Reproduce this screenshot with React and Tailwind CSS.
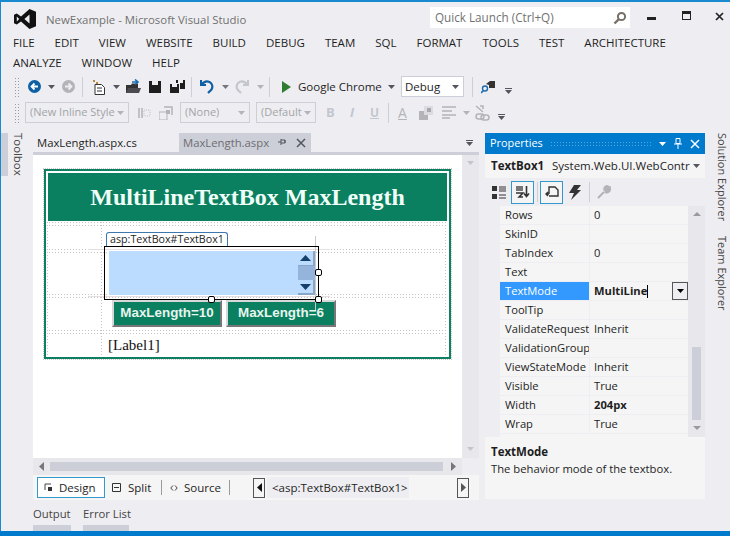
import React from "react";

const F = "font-['Open_Sans','Noto_Sans',sans-serif]";

const Grip = () => <div className="w-[5px] h-[20px] bg-[radial-gradient(#9a9aa0_1px,transparent_1px)] bg-[length:3px_3px]" />;
const Drop = ({ c = "#55555f" }) => (
  <svg width="7" height="4" viewBox="0 0 7 4" className="shrink-0"><path d="M0 0h7L3.5 4z" fill={c} /></svg>
);
const Sep = () => <div className="w-px h-[20px] bg-[#ccced8]" />;

const Logo = () => (
  <svg width="22" height="20" viewBox="0 0 22 20">
    <path d="M15.5 0L22 2.8V17.2L15.5 20L7 12.5L2.8 15.6L0 14.2V5.8L2.8 4.4L7 7.5ZM15.5 5.4L10.4 10L15.5 14.6ZM2.8 7.6V12.4L5.2 10Z" fill="#111" />
  </svg>
);

const Combo = ({ w, text }) => (
  <div className={`h-[21px] flex items-center justify-between pl-[4px] pr-[4px] gap-[2px] border border-[#ccced8] text-[#a2a4a5] ${w}`}>
    <span className="text-[11px] overflow-hidden whitespace-nowrap">{text}</span>
    <Drop c="#b4b4b8" />
  </div>
);

const rows = [
  ["Rows", "0"], ["SkinID", ""], ["TabIndex", "0"], ["Text", ""], ["TextMode", "MultiLine", "sel"],
  ["ToolTip", ""], ["ValidateRequest", "Inherit"], ["ValidationGroup", ""], ["ViewStateMode", "Inherit"],
  ["Visible", "True"], ["Width", "204px", "bold"], ["Wrap", "True"],
];

const Dots = () => <div className="h-[7px] bg-[radial-gradient(#c4c4c4_0.6px,transparent_0.7px)] bg-[length:3px_3px]" />;
const Overflow = () => <div className="flex flex-col gap-[1px]"><div className="w-[7px] h-px bg-[#55555f]" /><Drop /></div>;

export default function App() {
  return (
    <div className={`${F} relative w-[730px] h-[536px] overflow-hidden bg-[#eeeef2] text-[#1e1e1e] flex flex-col border-t-2 border-[#1a8ad0]`}>
      <div className="absolute left-0 top-0 bottom-0 w-px bg-[#1a8ad0]" />
      {/* title */}
      <div className="h-[31px] flex items-center pl-[14px] shrink-0">
        <div className="mt-[3px] w-[22px]"><Logo /></div>
        <span className="ml-[10px] w-[384px] mt-[5px] text-[11.4px] text-[#717171] whitespace-nowrap">NewExample - Microsoft Visual Studio</span>
        <div className="w-[200px] h-[21px] bg-white flex items-center justify-between pl-[5px] pr-[3px]">
          <span className="text-[11.7px] text-[#717171]">Quick Launch (Ctrl+Q)</span>
          <svg width="14" height="14" viewBox="0 0 14 14"><circle cx="8.5" cy="5.5" r="3.6" fill="none" stroke="#77706a" strokeWidth="2" /><path d="M6 8L1.5 12.5" stroke="#77706a" strokeWidth="2.4" /></svg>
        </div>
        <div className="ml-[17px] w-[9px] h-[3px] mt-[2px] bg-[#222]" />
        <div className="ml-[26px] mt-[-5px] w-[9px] h-[9px] border border-[#222] border-t-[3px]" />
        <svg className="ml-[24px] mt-[-3px]" width="9" height="9" viewBox="0 0 9 9"><path d="M1 1L8 8M8 1L1 8" stroke="#222" strokeWidth="1.7" /></svg>
      </div>
      {/* menu */}
      <div className="pl-[13px] text-[11.5px] leading-[20px] text-[#1e1e1e] shrink-0 flex flex-wrap gap-x-[20px] w-[700px]">
        {["FILE", "EDIT", "VIEW", "WEBSITE", "BUILD", "DEBUG", "TEAM", "SQL", "FORMAT", "TOOLS", "TEST", "ARCHITECTURE", "ANALYZE", "WINDOW", "HELP"].map((m) => (
          <span key={m} className="whitespace-nowrap">{m}</span>
        ))}
      </div>
      {/* toolbar 1 */}
      <div className="h-[25px] mt-[1px] mb-[1px] pl-[14px] flex items-center shrink-0">
        <Grip />
        <svg className="ml-[9px]" width="13" height="13" viewBox="0 0 13 13"><circle cx="6.5" cy="6.5" r="6.5" fill="#0e5fa4" /><path d="M10 6.5H4M6.5 3.5l-3 3 3 3" stroke="#fff" strokeWidth="1.8" fill="none" /></svg>
        <div className="ml-[7px]"><Drop /></div>
        <svg className="ml-[7px]" width="13" height="13" viewBox="0 0 13 13"><circle cx="6.5" cy="6.5" r="6.5" fill="#b4b4b8" /><path d="M3 6.5H9M6.5 3.5l3 3-3 3" stroke="#eeeef2" strokeWidth="1.8" fill="none" /></svg>
        <div className="ml-[7px]"><Sep /></div>
        <svg className="ml-[9px]" width="14" height="16" viewBox="0 0 14 16"><path d="M3 5.5h6.5l3 3v7H3z" fill="#fff" stroke="#333" /><path d="M1 1h2v2H1zM4 3h2v2H4z" fill="#b9893a" /><path d="M5 9h5M5 12h5" stroke="#333" /></svg>
        <div className="ml-[7px]"><Drop /></div>
        <svg className="ml-[6px]" width="15" height="15" viewBox="0 0 15 15"><path d="M0 6h5l1-1.5h6V14H0z" fill="#333" /><path d="M6 3h5M9 .5L12 3 9 5.500" stroke="#1a6cb0" strokeWidth="1.600" fill="none" /><path d="M2 9h13l-2 5H0z" fill="#4b4b50" /></svg>
        <svg className="ml-[8px]" width="12" height="12" viewBox="0 0 12 12"><path d="M0 0h12v12H0z" fill="#1e1e1e" /><path d="M3 0h6v4H3z" fill="#eeeef2" /><path d="M3 7h6v5H3z" fill="#1e1e1e" /></svg>
        <svg className="ml-[9px]" width="15" height="13" viewBox="0 0 15 13"><path d="M0 4h9v9H0z" fill="#1e1e1e" /><path d="M2 4h5v3H2z" fill="#eeeef2" /><path d="M6 0h9v9h-5V3H6z" fill="#1e1e1e" /><path d="M8 0h5v3H8z" fill="#eeeef2" /></svg>
        <div className="ml-[6px]"><Sep /></div>
        <svg className="ml-[8px]" width="14" height="15" viewBox="0 0 14 15"><path d="M1 1v5h5M2 5.500C4 2.500 7 2 9.500 3c3 1.500 3.500 5 2 7.500L8 14" stroke="#0e5fa4" strokeWidth="2.200" fill="none" /></svg>
        <div className="ml-[8px]"><Drop c="#77777f" /></div>
        <svg className="ml-[6px]" width="14" height="15" viewBox="0 0 14 15"><path d="M13 1v5H8M12 5.500C10 2.500 7 2 4.500 3c-3 1.500-3.500 5-2 7.500L6 14" stroke="#c4c6ce" strokeWidth="2.200" fill="none" /></svg>
        <div className="ml-[8px]"><Drop c="#b4b4b8" /></div>
        <div className="ml-[5px]"><Sep /></div>
        <svg className="ml-[12px]" width="9" height="12" viewBox="0 0 9 12"><path d="M0 0l9 6-9 6z" fill="#2e7d32" /></svg>
        <span className="ml-[7px] w-[84px] text-[11.5px] whitespace-nowrap">Google Chrome</span>
        <div className="ml-[6px]"><Drop /></div>
        <div className="ml-[6px] w-[63px] h-[21px] bg-white border border-[#ccced8] flex items-center justify-between pl-[3px] pr-[4px]">
          <span className="text-[11.5px]">Debug</span><Drop />
        </div>
        <div className="ml-[8px]"><Sep /></div>
        <svg className="ml-[8px]" width="15" height="15" viewBox="0 0 15 15"><path d="M5 5l4-3h5v7H8V6z" fill="#333" /><circle cx="4" cy="9.500" r="2.500" fill="none" stroke="#1a6cb0" strokeWidth="1.400" /><path d="M2.500 11.500L0 14" stroke="#1a6cb0" strokeWidth="1.600" /></svg>
        <div className="ml-[9px] mt-[8px]"><Overflow /></div>
      </div>
      {/* toolbar 2 */}
      <div className="h-[25px] pl-[14px] flex items-center shrink-0 text-[#a2a4a5]">
        <Grip />
        <div className="ml-[6px]"><Combo w="w-[104px]" text="(New Inline Style" /></div>
        <svg className="ml-[8px]" width="14" height="12" viewBox="0 0 14 12"><path d="M2 1v10M5 1v10" stroke="#b4b4b8" strokeWidth="1.500" /><path d="M7 3h6v6H7z" fill="none" stroke="#c4c6ce" strokeDasharray="1 1" /></svg>
        <svg className="ml-[8px]" width="14" height="14" viewBox="0 0 14 14"><path d="M0 6h8v8H0z" fill="none" stroke="#b4b4b8" /><path d="M5 1h8v8" fill="none" stroke="#b4b4b8" strokeWidth="1.500" /><path d="M7 4h4v4H7z" fill="#b4b4b8" /></svg>
        <div className="ml-[7px]"><Combo w="w-[70px]" text="(None)" /></div>
        <div className="ml-[6px]"><Combo w="w-[60px]" text="(Default" /></div>
        <span className="ml-[10px] w-[11px] text-[13px] font-bold text-[#c4c6ce]">B</span>
        <span className="ml-[13px] w-[5px] text-[13px] italic font-bold text-[#c4c6ce]">I</span>
        <span className="ml-[15px] w-[9px] text-[12px] underline font-bold text-[#c4c6ce]">U</span>
        <div className="ml-[9px]"><Sep /></div>
        <span className="ml-[9px] w-[12px] text-[14px] text-[#b4b4b8] underline">A</span>
        <svg className="ml-[9px]" width="14" height="14" viewBox="0 0 14 14"><path d="M0 5h9v9H0z" fill="#b4b4b8" /><path d="M5 0h9v9H5z" fill="#dcdce0" /><path d="M8 2h4v4H8z" fill="#a8a8ae" /></svg>
        <svg className="ml-[9px]" width="14" height="13" viewBox="0 0 14 13"><path d="M0 1h14M0 5h10M0 9h14M0 12h8" stroke="#b4b4b8" strokeWidth="1.500" /></svg>
        <div className="ml-[7px]"><Drop c="#b4b4b8" /></div>
        <svg className="ml-[5px]" width="15" height="16" viewBox="0 0 15 16"><path d="M1 1l7 6M5 1h3v3" stroke="#b4b4b8" strokeWidth="1.500" fill="none" /><rect x="1" y="9" width="8" height="5" rx="2.500" fill="none" stroke="#b4b4b8" strokeWidth="1.500" /><rect x="6" y="10" width="8" height="5" rx="2.500" fill="none" stroke="#b4b4b8" strokeWidth="1.500" /></svg>
        <div className="ml-[8px] mt-[8px]"><Overflow /></div>
      </div>
      {/* main */}
      <div className="flex flex-1 min-h-0 mt-[8px]">
        <div className="w-[33px] shrink-0 flex items-start">
          <div className="w-[8px] h-[43px] bg-[#ccced8]" />
          <span className="ml-[2px] [writing-mode:vertical-rl] text-[11.4px] leading-[16px] text-[#444]">Toolbox</span>
        </div>
        {/* editor column */}
        <div className="w-[452px] shrink-0 flex flex-col pr-[6px]">
          <div className="h-[19px] flex text-[11.3px] leading-[19px] shrink-0">
            <div className="w-[146px] pl-[4px] whitespace-nowrap">MaxLength.aspx.cs</div>
            <div className="w-[132px] bg-[#ccced8] flex items-center pl-[4px] text-[#6d6d70]">
              <span className="whitespace-nowrap w-[86px]">MaxLength.aspx</span>
              <svg className="ml-[9px]" width="9" height="9" viewBox="0 0 9 9"><path d="M3 1v6M3 2h4v3H3M0 4h3M7 2v3" stroke="#55555f" fill="none" /></svg>
              <svg className="ml-[9px]" width="10" height="10" viewBox="0 0 10 10"><path d="M1 1l8 8M9 1l-8 8" stroke="#55555f" strokeWidth="1.500" /></svg>
            </div>
            <div className="flex-1 flex items-center justify-end pr-[6px]"><Overflow /></div>
          </div>
          <div className="h-[3px] bg-[#ccced8] shrink-0" />
          {/* canvas + vscroll */}
          <div className="flex flex-1 min-h-0">
            <div className="flex-1 bg-white pl-[11px] pt-[14px]">
              <div className="relative w-[407px] h-[190px] border-2 border-[#0f7f61] p-[2px] outline-1 outline-dotted outline-[#c8c8c8] font-['Liberation_Serif',serif]">
                <div className="absolute left-[0px] top-[50px] bottom-[0px] w-[4px] bg-[radial-gradient(#c4c4c4_0.6px,transparent_0.7px)] bg-[length:3px_3px]" />
                <div className="absolute left-[54px] top-[50px] bottom-[0px] w-[4px] bg-[radial-gradient(#c4c4c4_0.6px,transparent_0.7px)] bg-[length:3px_3px]" />
                <div className="absolute right-[1px] top-[50px] bottom-[0px] w-[4px] bg-[radial-gradient(#c4c4c4_0.6px,transparent_0.7px)] bg-[length:3px_3px]" />
                <div className="h-[48px] bg-[#0a8060] flex items-center justify-center text-[24px] font-bold text-[#f0fff8] whitespace-nowrap">MultiLineTextBox MaxLength</div>
                <div className="relative h-[79px]">
                  <Dots />
                  <div className="mt-[20px]"><Dots /></div>
                  <div className="mt-[38px]"><Dots /></div>
                  <div className="absolute left-[40px] top-[28px] w-[242px] h-px bg-[#e6dfe1]" />
                  <div className="absolute left-[40px] top-[75px] w-[242px] h-px bg-[#e6dfe1]" />
                  <div className="absolute left-[267px] top-[15px] w-px h-[74px] bg-[#cdc6cc]" />
                  <div className="absolute left-[58px] top-[11px] h-[14px] px-[3px] bg-white border border-[#3d77b0] border-b-0 rounded-t-[3px] text-[10.7px] leading-[13px] font-['Open_Sans',sans-serif] whitespace-nowrap z-10">asp:TextBox#TextBox1</div>
                  <div className="absolute left-[56px] top-[25px] w-[215px] h-[54px] border border-black z-10 pl-[4px] pr-[3px] py-[4px]">
                    <div className="h-full bg-[#bbdcff] flex justify-end">
                      <div className="w-[17px] flex flex-col bg-[#94b4dc]">
                        <div className="h-[15px] bg-[#bbdcff] flex items-center justify-center border-r-2 border-b border-[#88a6c8]"><svg width="11" height="6" viewBox="0 0 11 6"><path d="M5.500 0L11 6H0z" fill="#15406b" /></svg></div>
                        <div className="flex-1" />
                        <div className="h-[15px] bg-[#bbdcff] flex items-center justify-center border-r-2 border-b-2 border-[#88a6c8]"><svg width="11" height="6" viewBox="0 0 11 6"><path d="M5.500 6L11 0H0z" fill="#15406b" /></svg></div>
                      </div>
                    </div>
                    <div className="absolute right-[-4px] top-[22px] w-[7px] h-[7px] rounded-[2px] bg-white border border-black" />
                    <div className="absolute left-[103px] bottom-[-4px] w-[7px] h-[7px] rounded-[2px] bg-white border border-black" />
                    <div className="absolute right-[-4px] bottom-[-4px] w-[7px] h-[7px] rounded-[2px] bg-white border border-black" />
                  </div>
                </div>
                <div className="flex pl-[64px] gap-[4px] h-[29px] font-['Liberation_Sans',sans-serif] text-[13.4px] font-bold text-[#e8f4ee]">
                  <div className="w-[110px] h-[27px] bg-[#0a8060] border-2 border-[#d8d8d8] border-r-[#777] border-b-[#777] flex items-center justify-center">MaxLength=10</div>
                  <div className="w-[110px] h-[27px] bg-[#0a8060] border-2 border-[#d8d8d8] border-r-[#777] border-b-[#777] flex items-center justify-center">MaxLength=6</div>
                </div>
                <Dots />
                <div className="pl-[60px] text-[15px] leading-[19px] text-[#111]">[Label1]</div>
              </div>
            </div>
            <div className="w-[17px] bg-[#e8e8ec] flex flex-col items-center justify-between pt-[6px] pb-[7px]">
              <Drop c="#c4c4cc" />
              <Drop c="#c4c4cc" />
            </div>
          </div>
          {/* hscroll */}
          <div className="h-[17px] shrink-0 flex items-center pl-[6px] bg-[#e8e8ec] w-[429px]">
            <svg width="5" height="9" viewBox="0 0 5 9"><path d="M5 0v9L0 4.500z" fill="#777" /></svg>
            <div className="w-[393px] h-[9px] bg-[#ccced8] ml-[6px]" />
            <svg className="ml-[8px]" width="5" height="9" viewBox="0 0 5 9"><path d="M0 0v9l5-4.500z" fill="#777" /></svg>
          </div>
          {/* view bar */}
          <div className="h-[25px] shrink-0 bg-[#f5f5f5] flex items-center pl-[4px] text-[11.5px]">
            <div className="w-[68px] h-[21px] border border-[#3399cc] flex items-center pl-[6px] gap-[6px] bg-white">
              <svg width="9" height="9" viewBox="0 0 9 9"><path d="M1 7V1h6" fill="none" stroke="#444" /><path d="M4 4h4v4H4z" fill="#333" /></svg>
              <span>Design</span>
            </div>
            <svg className="ml-[7px]" width="9" height="9" viewBox="0 0 9 9"><path d="M.5.5h8v8h-8zM2 4.500h5" fill="none" stroke="#333" /></svg>
            <span className="ml-[7px] w-[26px]">Split</span>
            <div className="ml-[7px] w-px h-[15px] bg-[#99999f]" />
            <svg className="ml-[8px]" width="8" height="6" viewBox="0 0 8 6"><path d="M3 .5L.8 3 3 5.500M5 .5L7.200 3 5 5.500" fill="none" stroke="#444" /></svg>
            <span className="ml-[6px] w-[38px]">Source</span>
            <div className="ml-[7px] w-px h-[15px] bg-[#99999f]" />
            <div className="ml-[23px] w-[12px] h-[20px] border border-[#555] flex items-center justify-center"><svg width="5" height="9" viewBox="0 0 5 9"><path d="M5 0v9L0 4.500z" fill="#111" /></svg></div>
            <div className="ml-[2px] h-[21px] w-[142px] bg-[#eeeef2] flex items-center pl-[5px] whitespace-nowrap">&lt;asp:TextBox#TextBox1&gt;</div>
            <div className="ml-[48px] w-[12px] h-[20px] border border-[#555] flex items-center justify-center"><svg width="5" height="9" viewBox="0 0 5 9"><path d="M0 0v9l5-4.500z" fill="#555" /></svg></div>
          </div>
          {/* bottom tabs */}
          <div className="flex gap-[12px] text-[11.3px] text-[#444] pt-[6px] pb-[5px] leading-[16px] shrink-0">
            <div className="flex flex-col w-[38px]"><span>Output</span><div className="h-[6px] mt-[3px] bg-[#ccced8]" /></div>
            <div className="flex flex-col w-[46px]"><span className="whitespace-nowrap">Error List</span><div className="h-[6px] mt-[3px] bg-[#ccced8]" /></div>
          </div>
        </div>
        {/* properties */}
        <div className="w-[220px] shrink-0 flex flex-col h-[366px]">
          <div className="h-[21px] bg-[#007acc] flex items-center pl-[5px] pr-[5px] text-white shrink-0">
            <span className="text-[10.9px]">Properties</span>
            <div className="ml-[7px] flex-1 h-[6px] bg-[radial-gradient(#5aa9e0_0.7px,transparent_0.8px)] bg-[length:3px_3px]" />
            <div className="ml-[8px]"><Drop c="#fff" /></div>
            <svg className="ml-[8px]" width="8" height="11" viewBox="0 0 8 11"><path d="M2 .5h4v5H2zM0 6h8M4 6v5" stroke="#fff" fill="none" /></svg>
            <svg className="ml-[8px]" width="10" height="10" viewBox="0 0 10 10"><path d="M1 1l8 8M9 1l-8 8" stroke="#fff" strokeWidth="1.500" /></svg>
          </div>
          <div className="h-[24px] flex items-center pl-[6px] pr-[5px] text-[11.5px] shrink-0 bg-[#f5f5f5]">
            <b className="whitespace-nowrap font-bold w-[56px]">TextBox1</b>
            <span className="ml-[5px] whitespace-nowrap overflow-hidden w-[138px]">System.Web.UI.WebControls</span>
            <div className="ml-auto"><Drop /></div>
          </div>
          <div className="h-[28px] flex items-center pl-[7px] shrink-0">
            <svg width="14" height="13" viewBox="0 0 14 13"><path d="M0 0h5v5H0zM0 8h5v5H0z" fill="#333" /><path d="M7 1h7M7 3h7M7 5h7M7 9h7M7 12h7" stroke="#333" /></svg>
            <div className="ml-[5px] w-[23px] h-[23px] border border-[#3399cc] bg-[#f5f5f5] flex items-center justify-center">
              <svg width="15" height="14" viewBox="0 0 15 14"><path d="M1 1h7v5H1z" fill="#777" /><path d="M1 8h7l-4 4h4" stroke="#333" fill="none" strokeWidth="1.500" /><path d="M11.500 1v10M9 8.500l2.500 3 2.500-3" stroke="#333" strokeWidth="1.600" fill="none" /></svg>
            </div>
            <div className="ml-[3px] w-px h-[20px] bg-[#ccced8]" />
            <div className="ml-[2px] w-[23px] h-[23px] border border-[#3399cc] bg-[#f5f5f5] flex items-center justify-center">
              <svg width="15" height="13" viewBox="0 0 15 13"><path d="M5 8V1h6l3 3v6H5M2 8h3M4 6L2 8l2 2" fill="none" stroke="#333" strokeWidth="1.400" /></svg>
            </div>
            <svg className="ml-[6px]" width="12" height="15" viewBox="0 0 12 15"><path d="M5 0h7L8 5h4L2 15l3-7H0z" fill="#333" /></svg>
            <div className="ml-[8px] w-px h-[20px] bg-[#ccced8]" />
            <svg className="ml-[7px]" width="14" height="14" viewBox="0 0 14 14"><path d="M1 13l6-6M8 6a3 3 0 0 1 2-5l2 1-2 2 1 1 2-2a3.500 3.500 0 0 1-5 4" stroke="#b4b4b8" strokeWidth="2" fill="#b4b4b8" /></svg>
          </div>
          <div className="flex-1 min-h-0 flex">
            <div className="w-[15px] bg-[#eeeef2]" />
            <div className="w-[188px] bg-[#f5f5f5] text-[11.2px]">
              {rows.map(([k, v, t]) => (
                <div key={k} className="h-[19px] flex border-b border-[#eeeef2] leading-[18px]">
                  <div className={`w-[90px] pl-[5px] border-r border-[#eeeef2] whitespace-nowrap overflow-hidden ${t === "sel" ? "bg-[#3399ff] text-white" : ""}`}>{k}</div>
                  <div className="flex-1 flex items-center pl-[4px] relative">
                    <span className={t ? "font-bold" : ""}>{v}</span>
                    {t === "sel" && <>
                      <div className="w-px h-[13px] bg-black" />
                      <div className="absolute right-[0px] top-[0px] w-[16px] h-[18px] border border-[#555] bg-[#eeeef2] flex items-center justify-center"><svg width="7" height="4" viewBox="0 0 7 4"><path d="M0 0h7L3.500 4z" fill="#000" /></svg></div>
                    </>}
                  </div>
                </div>
              ))}
            </div>
            <div className="w-[17px] bg-[#e8e8ec] flex flex-col items-center pt-[6px] pb-[7px]">
              <svg width="8" height="4" viewBox="0 0 8 4"><path d="M4 0l4 4H0z" fill="#99999f" /></svg>
              <div className="flex-1" />
              <div className="w-[9px] h-[73px] bg-[#ccced8] mb-[6px]" />
              <svg width="8" height="4" viewBox="0 0 8 4"><path d="M4 4l4-4H0z" fill="#99999f" /></svg>
            </div>
          </div>
          <div className="h-[62px] shrink-0 bg-[#f5f5f5] pl-[6px] pt-[6px] text-[11.25px] leading-[17px]">
            <div className="font-bold text-[11.5px]">TextMode</div>
            <div>The behavior mode of the textbox.</div>
          </div>
        </div>
        <div className="flex-1 pl-[3px] text-[11px] text-[#444] leading-[16px] flex flex-col gap-[15px]">
          <span className="[writing-mode:vertical-rl]">Solution Explorer</span>
          <span className="[writing-mode:vertical-rl]">Team Explorer</span>
        </div>
      </div>
      <div className="absolute left-0 right-0 bottom-0 h-[5px] bg-[#007acc]" />
    </div>
  );
}
